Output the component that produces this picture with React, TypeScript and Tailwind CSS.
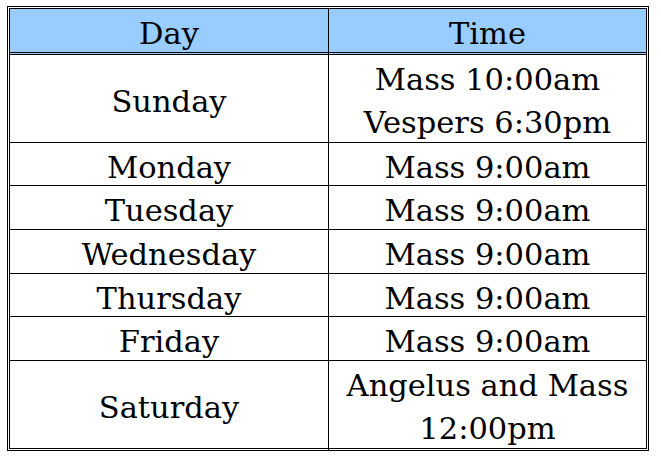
const rows: { day: string; time: string[]; h: string }[] = [
  { day: "Sunday", time: ["Mass 10:00am", "Vespers 6:30pm"], h: "h-[88px] border-b" },
  { day: "Monday", time: ["Mass 9:00am"], h: "h-[43px] border-b" },
  { day: "Tuesday", time: ["Mass 9:00am"], h: "h-[44px] border-b" },
  { day: "Wednesday", time: ["Mass 9:00am"], h: "h-[44px] border-b" },
  { day: "Thursday", time: ["Mass 9:00am"], h: "h-[43px] border-b" },
  { day: "Friday", time: ["Mass 9:00am"], h: "h-[44px] border-b" },
  { day: "Saturday", time: ["Angelus and Mass", "12:00pm"], h: "h-[87px]" },
];

export default function App() {
  return (
    <div className="h-[458px] w-[661px] bg-white pl-[7px] pt-[6px] font-['DejaVu_Serif',serif] text-[30.5px] leading-[43px] text-black">
      <div className="w-[642px] border-[3px] border-double border-black">
        <div className="grid h-[46px] grid-cols-[318px_1px_317px] border-b-[3px] border-double border-black bg-[#99ccff]">
          <div className="flex items-center justify-center pt-[3px]">Day</div>
          <div className="bg-black" />
          <div className="flex items-center justify-center pt-[3px]">Time</div>
        </div>
        {rows.map((r) => (
          <div key={r.day} className={`grid grid-cols-[318px_1px_317px] border-black ${r.h}`}>
            <div className="flex items-center justify-center pt-[3px]">{r.day}</div>
            <div className="bg-black" />
            <div className="flex flex-col items-center justify-center pt-[3px]">
              {r.time.map((t) => (
                <span key={t}>{t}</span>
              ))}
            </div>
          </div>
        ))}
      </div>
    </div>
  );
}
